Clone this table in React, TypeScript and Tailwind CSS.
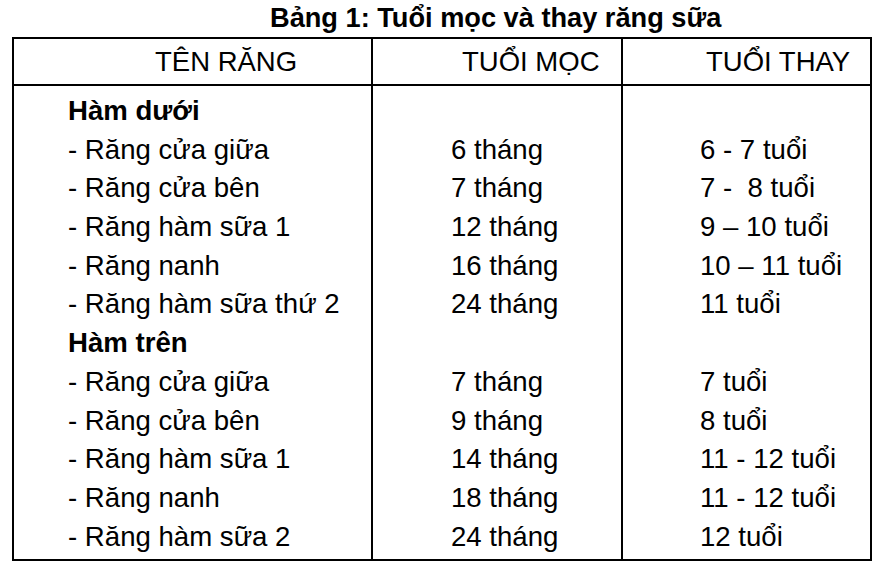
import React from "react";

const rows: { a: string; b: string; c: string; bold?: boolean }[] = [
  { a: "Hàm dưới", b: "", c: "", bold: true },
  { a: "- Răng cửa giữa", b: "6 tháng", c: "6 - 7 tuổi" },
  { a: "- Răng cửa bên", b: "7 tháng", c: "7 -  8 tuổi" },
  { a: "- Răng hàm sữa 1", b: "12 tháng", c: "9 – 10 tuổi" },
  { a: "- Răng nanh", b: "16 tháng", c: "10 – 11 tuổi" },
  { a: "- Răng hàm sữa thứ 2", b: "24 tháng", c: "11 tuổi" },
  { a: "Hàm trên", b: "", c: "", bold: true },
  { a: "- Răng cửa giữa", b: "7 tháng", c: "7 tuổi" },
  { a: "- Răng cửa bên", b: "9 tháng", c: "8 tuổi" },
  { a: "- Răng hàm sữa 1", b: "14 tháng", c: "11 - 12 tuổi" },
  { a: "- Răng nanh", b: "18 tháng", c: "11 - 12 tuổi" },
  { a: "- Răng hàm sữa 2", b: "24 tháng", c: "12 tuổi" },
];

export default function App() {
  return (
    <div
      className="w-[891px] h-[563px] bg-white text-black overflow-hidden"
      style={{ fontFamily: '"Liberation Sans", Arial, sans-serif' }}
    >
      <div className="h-[37px] pt-[4px] pl-[270px] text-[27.2px] font-bold leading-none whitespace-nowrap">
        Bảng 1: Tuổi mọc và thay răng sữa
      </div>
      <div className="ml-[12px] w-[860px] border-2 border-black">
        <div className="grid grid-cols-[359px_250px_247px] h-[47px] border-b-2 border-black text-[27.5px] leading-none">
          <div className="border-r-2 border-black pl-[141px] flex items-center">TÊN RĂNG</div>
          <div className="border-r-2 border-black pl-[89px] flex items-center">TUỔI MỌC</div>
          <div className="pl-[83px] flex items-center">TUỔI THAY</div>
        </div>
        <div className="grid grid-cols-[359px_250px_247px] text-[27.6px] pt-[6px] pb-[2.6px]">
          <div className="border-r-2 border-black pl-[54px] -mt-[6px] -mb-[2.6px] pt-[6px] pb-[2.6px]">
            {rows.map((r, i) => (
              <div
                key={i}
                className={`h-[38.7px] leading-[38.7px] whitespace-pre ${r.bold ? "font-bold" : ""}`}
              >
                {r.a}
              </div>
            ))}
          </div>
          <div className="border-r-2 border-black pl-[78px] -mt-[6px] -mb-[2.6px] pt-[6px] pb-[2.6px]">
            {rows.map((r, i) => (
              <div key={i} className="h-[38.7px] leading-[38.7px] whitespace-pre">
                {r.b}
              </div>
            ))}
          </div>
          <div className="pl-[77px]">
            {rows.map((r, i) => (
              <div key={i} className="h-[38.7px] leading-[38.7px] whitespace-pre">
                {r.c}
              </div>
            ))}
          </div>
        </div>
      </div>
    </div>
  );
}
